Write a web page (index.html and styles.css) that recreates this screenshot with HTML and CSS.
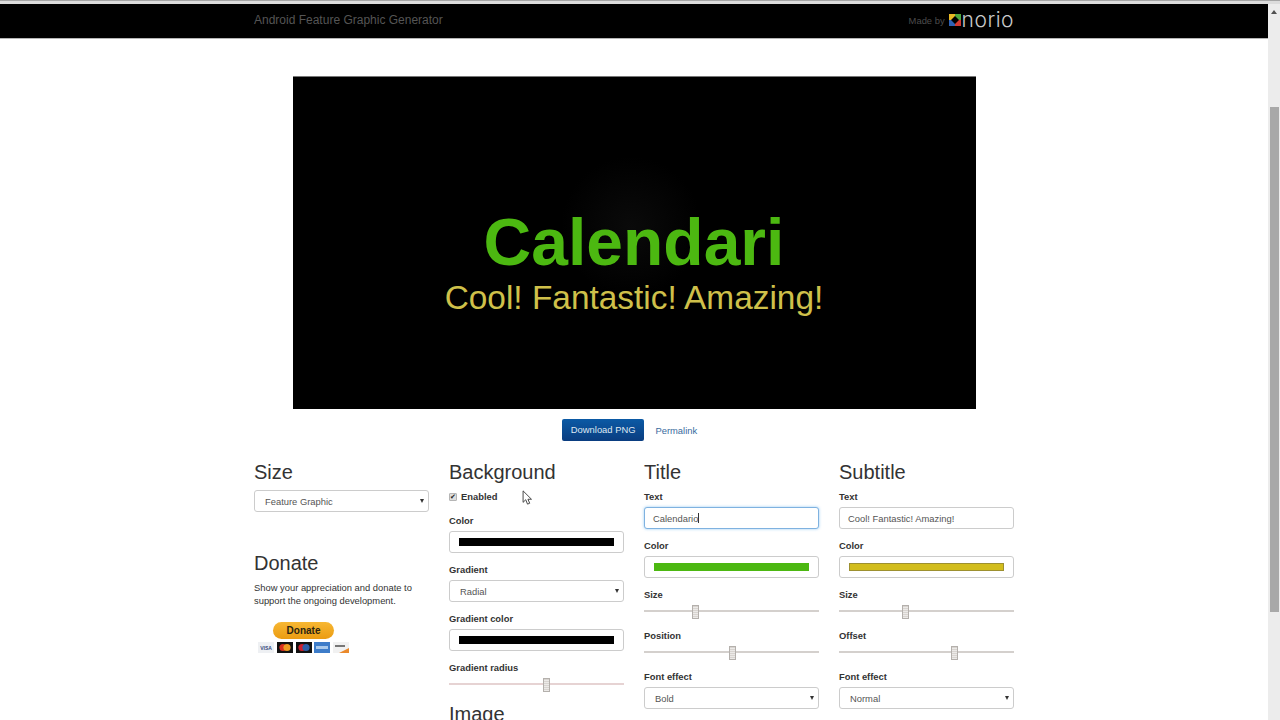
FILE: index.html
```html
<!DOCTYPE html>
<html lang="en">
<head>
    <meta charset="UTF-8">
    <title>Android Feature Graphic Generator</title>
    <link rel="stylesheet" href="styles.css">
</head>
<body>

<div class="window-strip"></div>

<div class="window">
    <div class="page">
        <div class="navbar">
            <div class="navbar-inner">
                <span class="brand">Android Feature Graphic Generator</span>
                <div class="made-by">
                    <span>Made by</span>
                    <svg class="norio-mark" viewBox="0 0 12 12" width="12" height="12">
                        <rect width="6" height="6" fill="#e8b923"/>
                        <rect x="6" width="6" height="6" fill="#4fa83d"/>
                        <rect y="6" width="6" height="6" fill="#2f62b5"/>
                        <rect x="6" y="6" width="6" height="6" fill="#d13a32"/>
                        <path d="M6 2L10 6L6 10L2 6Z" fill="#000"/>
                    </svg>
                    <span class="norio">norio</span>
                </div>
            </div>
        </div>

        <div class="preview">
            <div class="canvas">
                <div class="canvas-title">Calendari</div>
                <div class="canvas-subtitle">Cool! Fantastic! Amazing!</div>
            </div>
        </div>

        <div class="actions">
            <a class="btn-download">Download PNG</a>
            <a class="permalink">Permalink</a>
        </div>

        <div class="columns">
            <div class="column">
                <h3>Size</h3>
                <div class="select">Feature Graphic</div>

                <h3 class="donate-heading">Donate</h3>
                <p class="donate-text">Show your appreciation and donate to support the ongoing development.</p>
                <div class="paypal">
                    <div class="paypal-btn">Donate</div>
                    <div class="cards">
                        <svg viewBox="0 0 16 11" width="16" height="11"><rect width="16" height="11" fill="#eef0f3"/><text x="8" y="7.500" text-anchor="middle" class="card-text">VISA</text></svg>
                        <svg viewBox="0 0 16 11" width="16" height="11"><rect width="16" height="11" fill="#111"/><circle cx="6" cy="5.500" r="3.600" fill="#d8301f"/><circle cx="10" cy="5.500" r="3.600" fill="#ee9b22"/></svg>
                        <svg viewBox="0 0 16 11" width="16" height="11"><rect width="16" height="11" fill="#111"/><circle cx="6" cy="5.500" r="3.600" fill="#cf1f2c"/><circle cx="10" cy="5.500" r="3.600" fill="#2d5ea8"/></svg>
                        <svg viewBox="0 0 16 11" width="16" height="11"><rect width="16" height="11" fill="#3d7cc9"/><rect x="2" y="4" width="12" height="3" fill="#a9c9ec"/></svg>
                        <svg viewBox="0 0 16 11" width="16" height="11"><rect width="16" height="11" fill="#f1f1f1"/><rect x="2" y="3" width="10" height="2" fill="#777"/><path d="M6 11L16 6V11Z" fill="#ea8a2c"/></svg>
                    </div>
                </div>
            </div>

            <div class="column">
                <h3>Background</h3>
                <div class="check"><span class="check-box">&#10004;</span><span>Enabled</span></div>
                <div class="field">
                    <label>Color</label>
                    <div class="color-input"><div class="swatch swatch-black"></div></div>
                </div>
                <div class="field">
                    <label>Gradient</label>
                    <div class="select">Radial</div>
                </div>
                <div class="field">
                    <label>Gradient color</label>
                    <div class="color-input"><div class="swatch swatch-black"></div></div>
                </div>
                <div class="field-slider">
                    <label>Gradient radius</label>
                    <div class="slider slider-pink"><div class="thumb" style="left: 55.4%"></div></div>
                </div>
                <h3 class="image-heading">Image</h3>
            </div>

            <div class="column">
                <h3>Title</h3>
                <div class="field">
                    <label>Text</label>
                    <div class="text-input focused">Calendario<span class="caret"></span></div>
                </div>
                <div class="field">
                    <label>Color</label>
                    <div class="color-input"><div class="swatch swatch-green"></div></div>
                </div>
                <div class="field-slider">
                    <label>Size</label>
                    <div class="slider"><div class="thumb" style="left: 29%"></div></div>
                </div>
                <div class="field-slider">
                    <label>Position</label>
                    <div class="slider"><div class="thumb" style="left: 50%"></div></div>
                </div>
                <div class="field">
                    <label>Font effect</label>
                    <div class="select">Bold</div>
                </div>
            </div>

            <div class="column">
                <h3>Subtitle</h3>
                <div class="field">
                    <label>Text</label>
                    <div class="text-input">Cool! Fantastic! Amazing!</div>
                </div>
                <div class="field">
                    <label>Color</label>
                    <div class="color-input"><div class="swatch swatch-yellow"></div></div>
                </div>
                <div class="field-slider">
                    <label>Size</label>
                    <div class="slider"><div class="thumb" style="left: 37.7%"></div></div>
                </div>
                <div class="field-slider">
                    <label>Offset</label>
                    <div class="slider"><div class="thumb" style="left: 65.7%"></div></div>
                </div>
                <div class="field">
                    <label>Font effect</label>
                    <div class="select">Normal</div>
                </div>
            </div>
        </div>

        <svg class="cursor" viewBox="0 0 12 17" width="11" height="15">
            <path d="M1 1V14L4 11L6 16L8.500 15L6.500 10.500H10.500Z" fill="#fff" stroke="#333" stroke-width="1"/>
        </svg>
    </div>

    <div class="scrollbar">
        <div class="scroll-up"></div>
        <div class="scroll-thumb"></div>
    </div>
</div>

</body>
</html>
```

FILE: styles.css
```css
html, body {
    height: 100%;
    margin: 0;
    overflow: hidden;
}
body {
    font-family: 'Liberation Sans', Arial, sans-serif;
    font-size: 9.4px;
    color: #333;
    background-color: #fff;
}
.window-strip {
    height: 4px;
    background-color: #dcdcdc;
    border-top: 1px solid #a5a5a5;
    box-sizing: border-box;
}
.window {
    display: flex;
    height: 716px;
}
.page {
    flex: 1;
    position: relative;
    overflow: hidden;
}

/* top bar */
.navbar {
    height: 34px;
    background-color: #000;
    border-bottom: 1px solid #b5b5b5;
}
.navbar-inner {
    width: 760px;
    height: 100%;
    box-sizing: border-box;
    padding-bottom: 2px;
    margin: 0 auto;
    display: flex;
    justify-content: space-between;
    align-items: center;
}
.brand {
    font-size: 12px;
    color: #555;
}
.made-by {
    display: flex;
    align-items: center;
    font-size: 9.4px;
    color: #4c4c4c;
}
.norio-mark {
    margin-left: 4px;
}
.norio {
    font-family: 'Inter', sans-serif;
    font-weight: 300;
    font-size: 21px;
    line-height: 20px;
    letter-spacing: 0.5px;
    color: #c9c9c9;
    margin-left: 1px;
}

/* preview */
.preview {
    display: flex;
    justify-content: center;
    margin-top: 37px;
}
.canvas {
    width: 683px;
    height: 333px;
    box-sizing: border-box;
    padding-top: 129px;
    text-align: center;
    background: radial-gradient(circle at 49.5% 45%, #0a0a0a 0, #000 70px);
    border-top: 1px solid #777;
}
.canvas-title {
    font-size: 66px;
    line-height: 72px;
    font-weight: bold;
    color: #4cb811;
}
.canvas-subtitle {
    font-size: 33.4px;
    line-height: 40px;
    color: #cfc04a;
}

.actions {
    display: flex;
    justify-content: center;
    align-items: center;
    gap: 11px;
    margin-top: 10px;
    padding-right: 9px;
}
.btn-download {
    padding: 0 9px;
    height: 22px;
    line-height: 22px;
    color: #dfe8f2;
    background: linear-gradient(#0b5aa5, #0a3d80);
    border-radius: 2px;
}
.permalink {
    color: #386b9e;
}

/* form columns */
.columns {
    width: 760px;
    margin: 19px auto 0;
    display: grid;
    grid-template-columns: repeat(4, 175px);
    column-gap: 20px;
}
h3 {
    font-size: 20px;
    font-weight: normal;
    line-height: 24px;
    margin: 0 0 6px;
}
label {
    display: block;
    font-weight: bold;
    line-height: 13px;
    margin-bottom: 4px;
}
.field {
    margin-bottom: 10px;
}
.field-slider {
    margin-bottom: 11px;
}
.field-slider label {
    margin-bottom: 1px;
}
.select, .text-input, .color-input {
    box-sizing: border-box;
    height: 22px;
    border: 1px solid #ccc;
    border-radius: 3px;
    background-color: #fff;
    line-height: 21px;
}
.select {
    position: relative;
    padding-left: 10px;
    color: #555;
}
.select::after {
    content: "";
    position: absolute;
    right: 4px;
    top: 8px;
    border-left: 2px solid transparent;
    border-right: 2px solid transparent;
    border-top: 4px solid #333;
}
.text-input {
    padding-left: 8px;
    color: #555;
}
.focused {
    border-color: #7fb2e0;
    box-shadow: 0 0 3px rgba(82, 168, 236, 0.6);
}
.caret {
    display: inline-block;
    width: 1px;
    height: 10px;
    background-color: #333;
    vertical-align: -1px;
}
.color-input {
    padding: 6px 9px;
}
.swatch {
    height: 8px;
}
.swatch-black {
    background-color: #000;
}
.swatch-green {
    background-color: #4cb811;
}
.swatch-yellow {
    background-color: #d2bd1d;
    border: 1px solid #9d9030;
    box-sizing: border-box;
}
.slider {
    position: relative;
    height: 16px;
}
.slider::before {
    content: "";
    display: block;
    position: absolute;
    left: 0;
    right: 0;
    top: 8px;
    height: 2px;
    background-color: #d4d0cd;
}
.slider-pink {
    margin-top: 1px;
}
.slider-pink::before {
    background-color: #e6d3d3;
}
.thumb {
    position: absolute;
    top: 3px;
    width: 7px;
    height: 14px;
    margin-left: -3px;
    border: 1px solid #b4b0ac;
    box-sizing: border-box;
    background: repeating-linear-gradient(#d8d4d0 0 1px, #eceae8 1px 2px);
}
.check {
    display: flex;
    align-items: center;
    gap: 4px;
    height: 14px;
    margin-top: 1px;
    margin-bottom: 10px;
    line-height: 14px;
    font-weight: bold;
}
.check-box {
    box-sizing: border-box;
    width: 8px;
    height: 8px;
    border: 1px solid #b5b5b5;
    border-radius: 1px;
    background-color: #ddd;
    font-size: 7px;
    line-height: 6px;
    font-weight: normal;
    color: #222;
}
.image-heading {
    margin-top: 3px;
}

/* donate */
.donate-heading {
    margin-top: 39px;
    margin-bottom: 6px;
}
.donate-text {
    margin: 0;
    line-height: 13px;
}
.paypal {
    margin: 15px 0 0 4px;
    width: 91px;
}
.paypal-btn {
    width: 61px;
    height: 17px;
    margin: 0 auto;
    line-height: 17px;
    text-align: center;
    font-weight: bold;
    font-size: 10px;
    color: #2b2412;
    background: linear-gradient(#f7b733, #eb9c12);
    border-radius: 9px;
}
.cards {
    display: flex;
    justify-content: space-between;
    margin-top: 3px;
}
.card-text {
    font-size: 5px;
    font-weight: bold;
    fill: #34497e;
}

/* things lying over the page */
.cursor {
    position: absolute;
    left: 522px;
    top: 486px;
}
.scrollbar {
    width: 12px;
    position: relative;
    background-color: #ececec;
}
.scroll-up {
    position: absolute;
    top: 6px;
    left: 3px;
    border-left: 3px solid transparent;
    border-right: 3px solid transparent;
    border-bottom: 4px solid #505050;
}
.scroll-thumb {
    position: absolute;
    top: 103px;
    left: 2px;
    right: 1px;
    height: 505px;
    background-color: #a8a8a8;
}
```
